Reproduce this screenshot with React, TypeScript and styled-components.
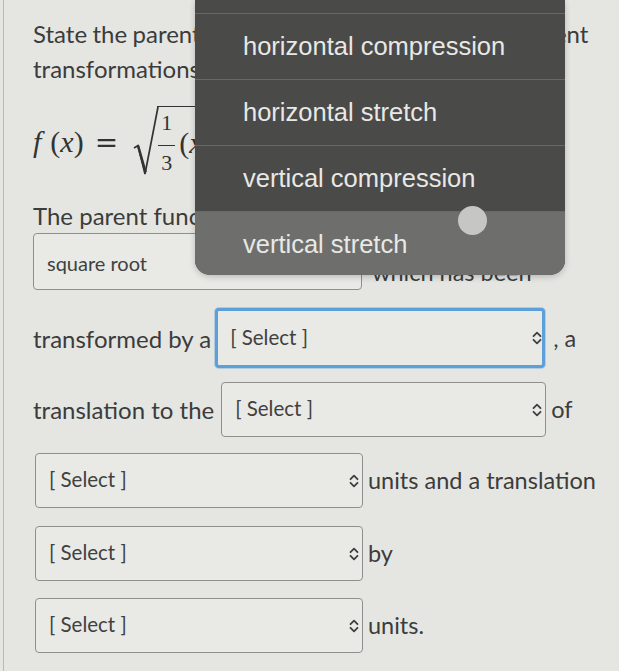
import React from "react";
import styled, { createGlobalStyle } from "styled-components";

const Global = createGlobalStyle`
  html, body { margin: 0; padding: 0; background: #e5e6e2; }
  body { font-family: Lato, "Open Sans", sans-serif; color: #3b3c3b; }
`;

const Page = styled.div`
  position: relative;
  width: 616px;
  height: 671px;
  overflow: hidden;
  box-sizing: border-box;
  margin-left: 3px;
  border-left: 1px solid #b9bab6;
  padding: 16px 0 0 29px;
  display: flex;
  flex-direction: column;
`;

const Prose = styled.p<{ $mt?: number; $ws?: number }>`
  margin: ${(p) => p.$mt ?? 0}px 0 0;
  font-size: 24px;
  line-height: 35px;
  white-space: nowrap;
  word-spacing: ${(p) => p.$ws ?? 0}px;
`;

const MathRow = styled.div`
  margin-top: 20px;
  height: 72px;
  display: flex;
  align-items: center;
  font-family: "Liberation Serif", "DejaVu Serif", serif;
  font-size: 30px;
  color: #333;
  white-space: nowrap;
`;

const MI = styled.span<{ $ml?: number; $mr?: number }>`
  font-style: italic;
  margin-left: ${(p) => p.$ml ?? 0}px;
  margin-right: ${(p) => p.$mr ?? 0}px;
`;

const MO = styled.span<{ $ml?: number; $mr?: number }>`
  margin-left: ${(p) => p.$ml ?? 0}px;
  margin-right: ${(p) => p.$mr ?? 0}px;
`;

const Equals = styled.span`
  font-family: "DejaVu Serif", serif;
  font-size: 28px;
  margin-left: 11px;
`;

const Radical = styled.span`
  display: flex;
  align-self: stretch;
  margin-left: 15px;
`;

const Radicand = styled.span`
  display: flex;
  align-items: center;
  border-top: 1.6px solid #333;
  padding: 0 4px 0 1px;
  margin-left: -2px;
`;

const Frac = styled.span`
  display: inline-flex;
  flex-direction: column;
  align-items: center;
  font-size: 22px;
  line-height: 20px;
  margin-right: 4px;
`;

const Num = styled.span`
  padding: 0 3px 12px;
  border-bottom: 1.3px solid #333;
`;

const Den = styled.span`
  padding-top: 7px;
`;

const BoxRow = styled.div<{ $mt?: number; $ml?: number }>`
  display: flex;
  align-items: center;
  margin-top: ${(p) => p.$mt ?? 0}px;
  margin-left: ${(p) => p.$ml ?? 0}px;
  white-space: nowrap;
`;

const Label = styled.span`
  font-size: 24px;
  line-height: 35px;
`;

const Trail = styled.span<{ $ml?: number; $bottom?: boolean }>`
  font-size: 23.5px;
  line-height: 35px;
  margin-left: ${(p) => p.$ml ?? 0}px;
  align-self: ${(p) => (p.$bottom ? "flex-end" : "center")};
`;

const AnswerBox = styled.div`
  width: 329px;
  height: 57px;
  box-sizing: border-box;
  border: 1px solid #8f908d;
  border-radius: 4px;
  background: #e9eae6;
  display: flex;
  align-items: center;
  padding: 2px 0 0 13px;
  font-size: 20px;
  color: #404140;
`;

const SelectBox = styled.div<{ $w: number; $focused?: boolean; $ml?: number }>`
  width: ${(p) => p.$w}px;
  height: ${(p) => (p.$focused ? 60 : 55)}px;
  margin-left: ${(p) => p.$ml ?? 0}px;
  box-sizing: border-box;
  border: ${(p) => (p.$focused ? "3px solid #5d9fd8" : "1px solid #8f908d")};
  box-shadow: ${(p) => (p.$focused ? "0 0 0 1px rgba(120,170,215,0.45)" : "none")};
  border-radius: 4px;
  background: #e9eae6;
  display: flex;
  align-items: center;
  justify-content: space-between;
  padding: 0 ${(p) => (p.$focused ? 0 : 3)}px 0 ${(p) => (p.$focused ? 12 : 13)}px;
  font-size: 20.5px;
  color: #404140;
`;

const SelectText = styled.span`
  margin-top: -3px;
`;

const Menu = styled.div`
  position: absolute;
  left: 191px;
  top: 0;
  width: 370px;
  height: 275px;
  background: #4a4a48;
  border-radius: 0 0 15px 15px;
  overflow: hidden;
  font-family: "Liberation Sans", Arial, sans-serif;
  box-shadow: 0 2px 6px rgba(0, 0, 0, 0.2);
`;

const MenuList = styled.div`
  margin-top: -53px;
  display: flex;
  flex-direction: column;
`;

const MenuItem = styled.div<{ $active?: boolean; $first?: boolean }>`
  height: 66px;
  box-sizing: border-box;
  border-top: ${(p) => (p.$first ? "none" : "1.5px solid #686866")};
  background: ${(p) => (p.$active ? "#6e6f6c" : "transparent")};
  display: flex;
  align-items: center;
  padding-left: 48px;
  font-size: 25.5px;
  color: #e8e8e6;
  white-space: nowrap;
`;

const TouchDot = styled.div`
  position: absolute;
  left: 454px;
  top: 206px;
  width: 29px;
  height: 29px;
  border-radius: 50%;
  background: #c6c7c4;
`;

const Chevron = () => (
  <svg width="10" height="16" viewBox="0 0 10 16" fill="none">
    <path
      d="M1.5 6.2 L5 2.7 L8.5 6.2 M1.5 9.8 L5 13.3 L8.5 9.8"
      stroke="#3e3f3e"
      strokeWidth="1.8"
      strokeLinecap="round"
      strokeLinejoin="round"
    />
  </svg>
);

const RadicalSign = () => (
  <svg width="26" height="72" viewBox="0 0 26 72" fill="none">
    <path d="M1 42 L5 39.5 L12 68 L25 1" stroke="#333" strokeWidth="1.7" strokeLinejoin="miter" />
    <path d="M5 39.5 L12.5 66" stroke="#333" strokeWidth="2.6" />
  </svg>
);

type SelProps = { w: number; focused?: boolean; ml?: number };
const Select = ({ w, focused, ml }: SelProps) => (
  <SelectBox $w={w} $focused={focused} $ml={ml}>
    <SelectText>[ Select ]</SelectText>
    <Chevron />
  </SelectBox>
);

const options = [
  "horizontal translation",
  "horizontal compression",
  "horizontal stretch",
  "vertical compression",
  "vertical stretch",
];

export default function App() {
  return (
    <>
      <Global />
      <Page>
        <Prose $ws={-0.75}>State the parent function and identify all the different</Prose>
        <Prose>transformations applied to it.</Prose>
        <MathRow>
          <MI>f</MI>
          <MO $ml={9}>(</MO>
          <MI>x</MI>
          <MO>)</MO>
          <Equals>=</Equals>
          <Radical>
            <RadicalSign />
            <Radicand>
              <Frac>
                <Num>1</Num>
                <Den>3</Den>
              </Frac>
              <MO>(</MO>
              <MI>x</MI>
              <MO>&nbsp;− 2)</MO>
            </Radicand>
          </Radical>
        </MathRow>
        <Prose $mt={20}>The parent function is</Prose>
        <BoxRow>
          <AnswerBox>square root</AnswerBox>
          <Trail $ml={10} $bottom>which has been</Trail>
        </BoxRow>
        <BoxRow $mt={18}>
          <Label>transformed by a</Label>
          <Select w={330} focused ml={4} />
          <Trail $ml={8}>, a</Trail>
        </BoxRow>
        <BoxRow $mt={14}>
          <Label>translation to the</Label>
          <Select w={325} ml={7} />
          <Trail $ml={5}>of</Trail>
        </BoxRow>
        <BoxRow $mt={16} $ml={2}>
          <Select w={328} />
          <Trail $ml={5}>units and a translation</Trail>
        </BoxRow>
        <BoxRow $mt={18} $ml={2}>
          <Select w={328} />
          <Trail $ml={5}>by</Trail>
        </BoxRow>
        <BoxRow $mt={17} $ml={2}>
          <Select w={328} />
          <Trail $ml={5}>units.</Trail>
        </BoxRow>
        <Menu>
          <MenuList>
            {options.map((o, i) => (
              <MenuItem key={o} $first={i === 0} $active={i === options.length - 1}>
                {o}
              </MenuItem>
            ))}
          </MenuList>
        </Menu>
        <TouchDot />
      </Page>
    </>
  );
}
